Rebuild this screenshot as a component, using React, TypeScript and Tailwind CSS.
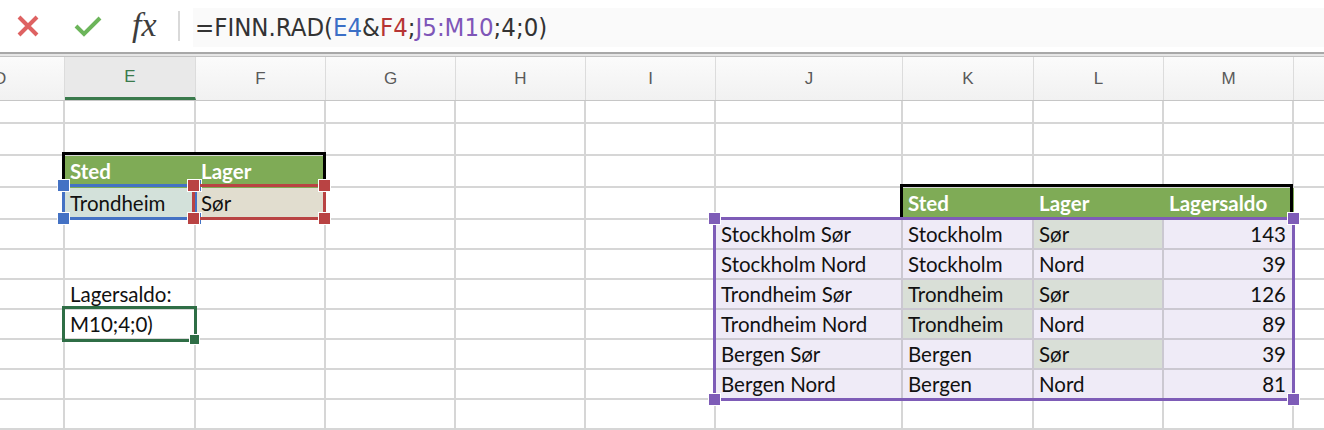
import React from 'react';

type Cell = { t?: string; c?: string; right?: boolean };

const HDR = 'bg-[#7fab56] border-[#7fab56] text-white font-bold';
const LAV = 'bg-[#efebf7] border-[#cbc8d1]';
const GRY = 'bg-[#d9dfd7] border-[#cbc8d1]';
const E4 = 'bg-[#d3e1da]';
const F4 = 'bg-[#e1ddcf]';

const COLS = ['D', 'E', 'F', 'G', 'H', 'I', 'J', 'K', 'L', 'M', ''];

const DATA: [string, string, string, string, boolean, boolean][] = [
  ['Stockholm Sør', 'Stockholm', 'Sør', '143', false, true],
  ['Stockholm Nord', 'Stockholm', 'Nord', '39', false, false],
  ['Trondheim Sør', 'Trondheim', 'Sør', '126', true, true],
  ['Trondheim Nord', 'Trondheim', 'Nord', '89', true, false],
  ['Bergen Sør', 'Bergen', 'Sør', '39', false, true],
  ['Bergen Nord', 'Bergen', 'Nord', '81', false, false],
];

function dataRow(i: number): Record<number, Cell> {
  const [j, k, l, m, kg, lg] = DATA[i];
  return {
    6: { t: j, c: LAV },
    7: { t: k, c: kg ? GRY : LAV },
    8: { t: l, c: lg ? GRY : LAV },
    9: { t: m, c: LAV, right: true },
  };
}

const ROWS: { h: string; cells: Record<number, Cell> }[] = [
  { h: 'h-[23px]', cells: {} },
  { h: 'h-[32px]', cells: {} },
  { h: 'h-[32px]', cells: { 1: { t: 'Sted', c: HDR }, 2: { t: 'Lager', c: HDR } } },
  {
    h: 'h-[32px]',
    cells: {
      1: { t: 'Trondheim', c: E4 },
      2: { t: 'Sør', c: F4 },
      7: { t: 'Sted', c: HDR },
      8: { t: 'Lager', c: HDR },
      9: { t: 'Lagersaldo', c: HDR },
    },
  },
  { h: 'h-[30px]', cells: dataRow(0) },
  { h: 'h-[30px]', cells: dataRow(1) },
  { h: 'h-[30px]', cells: { ...dataRow(2), 1: { t: 'Lagersaldo:' } } },
  { h: 'h-[30px]', cells: { ...dataRow(3), 1: { t: 'M10;4;0)' } } },
  { h: 'h-[30px]', cells: dataRow(4) },
  { h: 'h-[30px]', cells: dataRow(5) },
  { h: 'h-[30px]', cells: {} },
];

const GRID =
  'grid grid-cols-[65px_131px_130px_130px_130px_130px_187px_131px_130px_130px_30px]';

/* corner handles sit on the corners of a selection outline */
function Corners({ color }: { color: string }) {
  const base = `absolute w-[13px] h-[13px] border-[1.5px] border-white ${color}`;
  return (
    <>
      <div className={`${base} -left-[8px] -top-[8px]`} />
      <div className={`${base} -right-[8px] -top-[8px]`} />
      <div className={`${base} -left-[8px] -bottom-[8px]`} />
      <div className={`${base} -right-[8px] -bottom-[8px]`} />
    </>
  );
}

export default function App() {
  return (
    <div className="w-[1324px] h-[430px] overflow-hidden bg-white font-['Lato',sans-serif] text-[#111]">
      {/* Formula bar */}
      <div className="h-[52px] flex items-center bg-white">
        <div className="w-[56px] flex justify-center">
          <svg width="22" height="22" viewBox="0 0 22 22">
            <path d="M2 2 L20 20 M20 2 L2 20" stroke="#de6262" strokeWidth="4" />
          </svg>
        </div>
        <div className="w-[64px] flex justify-center">
          <svg width="28" height="22" viewBox="0 0 28 22">
            <path d="M2 11 L10 19 L26 3" stroke="#6cb55a" strokeWidth="4" fill="none" />
          </svg>
        </div>
        <div className="ml-[12px] w-[34px] font-['Liberation_Serif',serif] italic text-[34px] leading-none text-[#3d3d3d] pb-[3px]">
          fx
        </div>
        <div className="ml-[12px] w-[2px] h-[30px] bg-[#d9d9d9]" />
        <div className="ml-[13px] mt-[3px] flex-1 h-[39px] bg-[#fafafa] flex items-center pl-[2px] font-['Liberation_Sans_Narrow','DejaVu_Sans_Condensed',sans-serif] text-[25.5px] text-[#333] whitespace-nowrap">
          <span>=FINN.RAD(</span>
          <span className="text-[#3b6fc6]">E4</span>
          <span>&amp;</span>
          <span className="text-[#b63535]">F4</span>
          <span>;</span>
          <span className="text-[#7f56b8]">J5:M10</span>
          <span>;4;0)</span>
        </div>
      </div>
      {/* double line */}
      <div className="h-[5px] border-t-2 border-b border-t-[#a8a8a8] border-b-[#c2c2c2] bg-[#e6e6e6]" />
      {/* column headers */}
      <div className={`${GRID} h-[44px] border-b border-[#c6c6c6] bg-gradient-to-b from-[#fbfbfb] to-[#f1f1f1] font-['Liberation_Sans',sans-serif] text-[17px] text-[#5a5a5a]`}>
        {COLS.map((c, i) => (
          <div
            key={i}
            className={
              i === 0
                ? 'flex items-center justify-start border-r border-[#dcdcdc]'
                : i === 1
                ? 'flex items-center justify-center border-r border-[#dcdcdc] bg-[#e9e9e9] border-b-[3px] border-b-[#3a7a4c] text-[#3a7a4c]'
                : i === 10
                ? 'flex items-center justify-center'
                : 'flex items-center justify-center border-r border-[#dcdcdc]'
            }
          >
            {i === 0 ? <span className="-ml-[6px]">{c}</span> : c}
          </div>
        ))}
      </div>
      {/* body */}
      <div className="relative text-[20.5px]">
        {ROWS.map((r, ri) => (
          <div key={ri} className={`${GRID} ${r.h}`}>
            {COLS.map((_, ci) => {
              const cell = r.cells[ci];
              return (
                <div
                  key={ci}
                  className={`flex items-center pt-[1px] px-[5px] whitespace-nowrap overflow-hidden border-b-2 ${
                    ci === 10 ? '' : 'border-r-2'
                  } ${cell?.right ? 'justify-end pr-[6px]' : ''} ${cell?.c ?? 'border-[#d6d6d6]'}`}
                >
                  {cell?.t}
                </div>
              );
            })}
          </div>
        ))}

        {/* left table header outline */}
        <div className="absolute left-[62px] top-[51px] w-[264px] h-[33px] border-[3px] border-b-0 border-black" />
        {/* blue reference E4 */}
        <div className="absolute left-[62px] top-[83px] w-[135px] h-[36px] border-[3px] border-[#4472c4]">
          <Corners color="bg-[#4472c4]" />
        </div>
        {/* red reference F4 */}
        <div className="absolute left-[192px] top-[83px] w-[134px] h-[36px] border-[3px] border-[#b94343]">
          <Corners color="bg-[#b94343]" />
        </div>

        {/* right table header outline */}
        <div className="absolute left-[900px] top-[83px] w-[393px] h-[34px] border-[3px] border-b-0 border-black" />
        {/* purple reference J5:M10 */}
        <div className="absolute left-[713px] top-[116px] w-[582px] h-[184px] border-[3px] border-[#7e5cb7]">
          <Corners color="bg-[#7e5cb7]" />
        </div>

        {/* active cell E8 */}
        <div className="absolute left-[62px] top-[205px] w-[135px] h-[36px] border-[3px] border-[#2f6e46]">
          <div className="absolute -right-[6px] -bottom-[6px] w-[11px] h-[11px] border border-white bg-[#2f6e46]" />
        </div>
      </div>
    </div>
  );
}
